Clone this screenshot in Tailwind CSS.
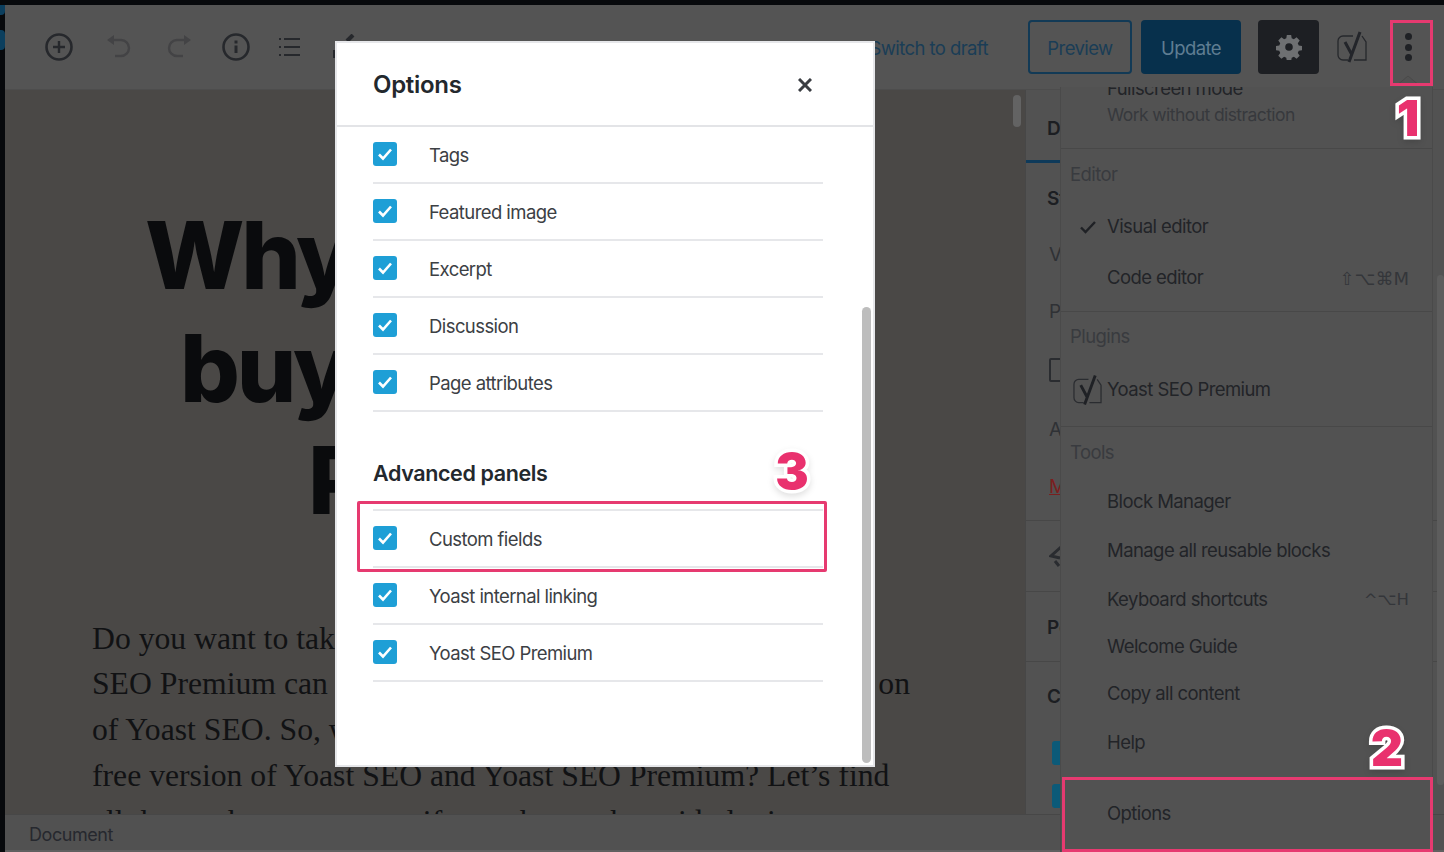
<!DOCTYPE html>
<html lang="en">
<head>
<meta charset="utf-8">
<title>Options</title>
<script src="https://cdn.jsdelivr.net/npm/@tailwindcss/browser@4"></script>
</head>
<body class="bg-[#07090c]">
<div class="relative w-[1444px] h-[852px] overflow-hidden font-['Inter','Liberation_Sans',sans-serif] text-[#24262a]">
  <div class="h-[5px] bg-[#07090c]"></div>
  <div class="flex h-[847px]">
    <div class="w-[5px] flex flex-col bg-[#07090c]">
      <div class="h-[10px] bg-[#0c3f5e] rounded-br-[4px]"></div>
      <div class="h-[15px]"></div>
      <div class="h-[20px] bg-[#0c3f5e] rounded-r-[4px]"></div>
    </div>
    <div class="flex-1 flex flex-col min-w-0">
      <header class="h-[85px] shrink-0 flex items-start bg-[#545454] border-b border-[#4d4d4d] pt-[15px] relative">
        <div class="flex items-center h-[54px] pl-[40px]">
          <svg class="w-[28px] h-[28px]" viewBox="0 0 28 28" fill="none" stroke="#26282c" stroke-width="2.6"><circle cx="14" cy="14" r="12.500"/><path d="M14 8v12M8 14h12" stroke-width="2.4"/></svg>
          <svg class="w-[28px] h-[28px] ml-[32px]" viewBox="0 0 28 28" fill="none" stroke="#434345" stroke-width="2.4"><path d="M9 7h7a8 8 0 0 1 0 16h-6"/><path d="M2 7l7-5v10z" fill="#434345" stroke="none"/></svg>
          <svg class="w-[28px] h-[28px] ml-[32px]" viewBox="0 0 28 28" fill="none" stroke="#434345" stroke-width="2.4"><path d="M19 7h-7a8 8 0 0 0 0 16h6"/><path d="M26 7l-7-5v10z" fill="#434345" stroke="none"/></svg>
          <svg class="w-[28px] h-[28px] ml-[29px]" viewBox="0 0 28 28" fill="none" stroke="#26282c" stroke-width="2.6"><circle cx="14" cy="14" r="12.500"/><path d="M14 12.500v7.500" stroke-width="3"/><path d="M14 7.500v3" stroke-width="3"/></svg>
          <svg class="w-[24px] h-[24px] ml-[28px]" viewBox="0 0 24 24" fill="none" stroke="#26282c" stroke-width="2"><path d="M6 4h16M6 12h16M6 20h16"/><path d="M1 4h2M1 12h2M1 20h2"/></svg>
          <svg class="w-[26px] h-[26px] ml-[31px]" viewBox="0 0 26 26" fill="none" stroke="#26282c" stroke-width="4"><path d="M1 24v-8"/><path d="M14 7l6-6"/></svg>
        </div>
        <div class="flex items-center h-[54px] ml-auto pr-[15px]">
          <span class="pt-[4px] text-[18.500px] tracking-[-0.031em] text-[#1a3d56] mr-[40px]">Switch to draft</span>
          <span class="w-[104px] h-[54px] pt-[4px] flex items-center justify-center border-2 border-[#123a56] rounded-[4px] text-[18.500px] tracking-[-0.031em] text-[#1a3d56]">Preview</span>
          <span class="w-[100px] h-[54px] pt-[4px] ml-[9px] flex items-center justify-center bg-[#07304c] rounded-[4px] text-[18.500px] tracking-[-0.031em] text-[#5f7d92]">Update</span>
          <span class="w-[61px] h-[54px] ml-[17px] flex items-center justify-center bg-[#1d1f23] rounded-[4px]">
            <svg class="w-[26px] h-[26px]" viewBox="0 0 24 24"><path fill="#6e7072" fill-rule="evenodd" d="M10 1h4l.5 3 2 .9 2.500-1.800 2.900 2.900-1.800 2.500.9 2 3 .5v4l-3 .5-.9 2 1.800 2.500-2.900 2.900-2.500-1.800-2 .9-.5 3h-4l-.5-3-2-.9-2.500 1.800-2.900-2.900 1.800-2.500-.9-2-3-.5v-4l3-.5.9-2-1.800-2.500 2.900-2.900 2.500 1.800 2-.9zM12 8.500a3.500 3.500 0 1 0 0 7 3.500 3.500 0 0 0 0-7z"/></svg>
          </span>
          <svg class="w-[30px] h-[32px] ml-[18px]" viewBox="0 0 30 32" fill="none"><path d="M16 5H6a5 5 0 0 0-5 5v14a5 5 0 0 0 5 5h5M25 5l4 6v18H17" stroke="#26282c" stroke-width="1.300"/><path d="M8 11l7 13M23 1L12 31" stroke="#23252a" stroke-width="3"/></svg>
          <div class="w-[42px] ml-[20px] flex flex-col items-center gap-[3.500px]">
            <span class="w-[7px] h-[7px] rounded-full bg-[#1f2125]"></span>
            <span class="w-[7px] h-[7px] rounded-full bg-[#1f2125]"></span>
            <span class="w-[7px] h-[7px] rounded-full bg-[#1f2125]"></span>
          </div>
        </div>
      </header>
      <div class="flex-1 flex min-h-0">
        <main class="w-[1020px] shrink-0 flex bg-[#4a4846] overflow-hidden">
          <div class="w-[1008px] shrink-0 overflow-hidden">
            <h1 class="pt-[109px] font-['Inter',sans-serif] font-extrabold text-[94px] leading-[112.500px] tracking-[-0.035em] text-[#0a0b0d] whitespace-nowrap">
              <div class="pl-[140px]">Why</div>
              <div class="pl-[175px]">buy</div>
              <div class="pl-[303px]">P</div>
            </h1>
            <div class="mt-[79px] pl-[87px] pr-[103px] font-['Liberation_Serif',serif] text-[31.700px] leading-[45.800px] text-[#111214] whitespace-nowrap">
              <p>Do you want to tak</p>
              <p class="flex justify-between"><span>SEO Premium can</span><span>on</span></p>
              <p>of Yoast SEO. So, w</p>
              <p>free version of Yoast SEO and Yoast SEO Premium? Let’s find</p>
              <p>all the work you can save if you choose the paid plugin</p>
            </div>
          </div>
          <div class="pt-[5px]"><div class="w-[8px] h-[32px] rounded-full bg-[#636363]"></div></div>
        </main>
        <aside class="flex-1 bg-[#525252] border-l border-[#474747] overflow-hidden text-[19px] text-[#1c1e22]">
          <div class="h-[73px] pl-[21px] pt-[25px] font-semibold relative">Document<div class="absolute left-0 bottom-0 w-[60px] h-[3px] bg-[#0e3a5a]"></div></div>
          <div class="pl-[21px] h-[358px] border-b border-[#474747] overflow-hidden">
            <div class="h-[62px] pt-[10px] flex items-center font-semibold">Status</div>
            <div class="h-[57px] pt-[4px] flex items-center pl-[2px] text-[#2f3135]">Visibility</div>
            <div class="h-[57px] pt-[4px] flex items-center pl-[2px] text-[#2f3135]">Publish</div>
            <div class="h-[58px] pt-[4px] flex items-center pl-[2px]"><span class="w-[24px] h-[24px] border-2 border-[#2a2c30] rounded-[2px]"></span></div>
            <div class="h-[62px] pt-[4px] flex items-center pl-[2px] text-[#2f3135]">Author</div>
            <div class="h-[56px] flex items-center pl-[2px] text-[#7a1f1f] underline">Move to trash</div>
          </div>
          <div class="h-[71px] pl-[23px] border-b border-[#474747] flex items-center">
            <svg class="w-[14px] h-[24px]" viewBox="0 0 14 24" fill="none" stroke="#2a2c30" stroke-width="3"><path d="M12 3L2 12l9 2M6 17l4 5"/></svg>
          </div>
          <div class="h-[70px] pl-[21px] pt-[4px] border-b border-[#474747] flex items-center font-semibold">Permalink</div>
          <div class="pl-[21px] h-[71px] flex items-center font-semibold">Categories</div>
          <div class="pl-[26px] pt-[8px] flex flex-col gap-[19px]">
            <span class="w-[24px] h-[24px] rounded-[3px] bg-[#0c5a78]"></span>
            <span class="w-[24px] h-[24px] rounded-[3px] bg-[#0c5a78]"></span>
          </div>
        </aside>
      </div>
      <footer class="h-[36px] shrink-0 bg-[#515151] border-t border-[#474747] pl-[24px] pt-[3px] flex items-center text-[18px] tracking-[-0.025em] text-[#26282e]">Document</footer>
      <div class="h-[2px] bg-[#606060] shrink-0"></div>
    </div>
  </div>

  <!-- Right page scrollbar -->
  <div class="absolute left-[1437px] top-[275px] w-[7px] h-[510px] rounded-full bg-[#5d5d5d]"></div>

  <!-- More-menu dropdown -->
  <nav class="absolute left-[1060px] top-[87px] w-[373px] h-[765px] overflow-hidden bg-[#525252] border-x border-[#4a4a4a] text-[18.500px] tracking-[-0.031em] text-[#222428]">
    <div class="-mt-[13px] h-[28px] pl-[46px] pt-[2px] flex items-center">Fullscreen mode</div>
    <div class="h-[26px] pl-[46px] flex items-center text-[17.500px] text-[#37393d]">Work without distraction</div>
    <div class="h-[21px] border-b border-[#484848]"></div>
    <div class="h-[50px] pl-[9px] pt-[2px] flex items-center text-[#393b3f]">Editor</div>
    <div class="h-[54px] pl-[18px] pt-[2px] flex items-center">
      <svg class="w-[18px] h-[18px] mr-[10px]" viewBox="0 0 18 18" fill="none" stroke="#1f2125" stroke-width="2.400"><path d="M2 9.500l4.500 4.500L16 4"/></svg>Visual editor
    </div>
    <div class="h-[48px] pl-[46px] pr-[23px] pt-[2px] flex items-center justify-between">Code editor<span class="text-[18px] tracking-normal text-[#34363a] font-['DejaVu_Sans',sans-serif]">⇧⌥⌘M</span></div>
    <div class="h-[11px] border-b border-[#484848]"></div>
    <div class="h-[48px] pl-[9px] pt-[2px] flex items-center text-[#393b3f]">Plugins</div>
    <div class="h-[58px] pl-[12px] pt-[2px] flex items-center">
      <svg class="w-[29px] h-[32px] mr-[5px]" viewBox="0 0 30 32" fill="none"><path d="M16 5H6a5 5 0 0 0-5 5v14a5 5 0 0 0 5 5h5M25 5l4 6v18H17" stroke="#2a2c30" stroke-width="1.300"/><path d="M8 11l7 13M23 1L12 31" stroke="#1f2125" stroke-width="3"/></svg>Yoast SEO Premium
    </div>
    <div class="h-[9px] border-b border-[#484848]"></div>
    <div class="h-[50px] pl-[9px] pt-[2px] flex items-center text-[#393b3f]">Tools</div>
    <div class="h-[48px] pl-[46px] pt-[2px] flex items-center">Block Manager</div>
    <div class="h-[50px] pl-[46px] pt-[2px] flex items-center">Manage all reusable blocks</div>
    <div class="h-[48px] pl-[46px] pr-[23px] pt-[2px] flex items-center justify-between">Keyboard shortcuts<span class="text-[16.500px] tracking-normal text-[#34363a] font-['DejaVu_Sans',sans-serif]">^⌥H</span></div>
    <div class="h-[46px] pl-[46px] pt-[2px] flex items-center">Welcome Guide</div>
    <div class="h-[48px] pl-[46px] pt-[2px] flex items-center">Copy all content</div>
    <div class="h-[50px] pl-[46px] pt-[2px] flex items-center">Help</div>
    <div class="h-[92px] pl-[46px] pt-[2px] flex items-center">Options</div>
  </nav>
  <svg class="absolute left-[1396px] top-[75px] w-[24px] h-[11px]" viewBox="0 0 24 11" fill="#525252" stroke="#4a4a4a"><path d="M0 11L12 1l12 10"/></svg>

  <!-- Options modal -->
  <section class="absolute left-[335px] top-[41px] w-[540px] h-[726px] overflow-hidden bg-white border-2 border-[#e6e7ea]">
    <div class="h-[84px] pt-[2px] border-b-2 border-[#e3e4e7] pl-[36px] pr-[61px] flex items-center justify-between">
      <h2 class="text-[24px] font-semibold tracking-[-0.012em] text-[#23282d]">Options</h2>
      <svg class="w-[14px] h-[14px]" viewBox="0 0 14 14" fill="none" stroke="#3a3d42" stroke-width="3"><path d="M1 1l12 12M13 1L1 13"/></svg>
    </div>
    <div class="pl-[36px] pr-[50px] text-[18.500px] tracking-[-0.031em] text-[#3c4044]">
      <div class="h-[57px] pt-[2px] flex items-center border-b-2 border-[#e6e7ea]"><span class="w-[24px] h-[24px] mb-[3px] rounded-[3px] bg-[#1e9fd6] flex items-center justify-center mr-[32px]"><svg class="w-[16px] h-[16px]" viewBox="0 0 16 16" fill="none" stroke="#fff" stroke-width="2.600"><path d="M2 8.500l4 4L14 3.500"/></svg></span>Tags</div>
      <div class="h-[57px] pt-[2px] flex items-center border-b-2 border-[#e6e7ea]"><span class="w-[24px] h-[24px] mb-[3px] rounded-[3px] bg-[#1e9fd6] flex items-center justify-center mr-[32px]"><svg class="w-[16px] h-[16px]" viewBox="0 0 16 16" fill="none" stroke="#fff" stroke-width="2.600"><path d="M2 8.500l4 4L14 3.500"/></svg></span>Featured image</div>
      <div class="h-[57px] pt-[2px] flex items-center border-b-2 border-[#e6e7ea]"><span class="w-[24px] h-[24px] mb-[3px] rounded-[3px] bg-[#1e9fd6] flex items-center justify-center mr-[32px]"><svg class="w-[16px] h-[16px]" viewBox="0 0 16 16" fill="none" stroke="#fff" stroke-width="2.600"><path d="M2 8.500l4 4L14 3.500"/></svg></span>Excerpt</div>
      <div class="h-[57px] pt-[2px] flex items-center border-b-2 border-[#e6e7ea]"><span class="w-[24px] h-[24px] mb-[3px] rounded-[3px] bg-[#1e9fd6] flex items-center justify-center mr-[32px]"><svg class="w-[16px] h-[16px]" viewBox="0 0 16 16" fill="none" stroke="#fff" stroke-width="2.600"><path d="M2 8.500l4 4L14 3.500"/></svg></span>Discussion</div>
      <div class="h-[57px] pt-[2px] flex items-center border-b-2 border-[#e6e7ea]"><span class="w-[24px] h-[24px] mb-[3px] rounded-[3px] bg-[#1e9fd6] flex items-center justify-center mr-[32px]"><svg class="w-[16px] h-[16px]" viewBox="0 0 16 16" fill="none" stroke="#fff" stroke-width="2.600"><path d="M2 8.500l4 4L14 3.500"/></svg></span>Page attributes</div>
      <h3 class="pt-[40px] pb-[14px] h-[99px] border-b-2 border-[#e6e7ea] text-[21.500px] leading-[42px] font-semibold tracking-[-0.018em] text-[#23282d]">Advanced panels</h3>
      <div class="h-[57px] pt-[2px] flex items-center border-b-2 border-[#e6e7ea]"><span class="w-[24px] h-[24px] mb-[3px] rounded-[3px] bg-[#1e9fd6] flex items-center justify-center mr-[32px]"><svg class="w-[16px] h-[16px]" viewBox="0 0 16 16" fill="none" stroke="#fff" stroke-width="2.600"><path d="M2 8.500l4 4L14 3.500"/></svg></span>Custom fields</div>
      <div class="h-[57px] pt-[2px] flex items-center border-b-2 border-[#e6e7ea]"><span class="w-[24px] h-[24px] mb-[3px] rounded-[3px] bg-[#1e9fd6] flex items-center justify-center mr-[32px]"><svg class="w-[16px] h-[16px]" viewBox="0 0 16 16" fill="none" stroke="#fff" stroke-width="2.600"><path d="M2 8.500l4 4L14 3.500"/></svg></span>Yoast internal linking</div>
      <div class="h-[57px] pt-[2px] flex items-center border-b-2 border-[#e6e7ea]"><span class="w-[24px] h-[24px] mb-[3px] rounded-[3px] bg-[#1e9fd6] flex items-center justify-center mr-[32px]"><svg class="w-[16px] h-[16px]" viewBox="0 0 16 16" fill="none" stroke="#fff" stroke-width="2.600"><path d="M2 8.500l4 4L14 3.500"/></svg></span>Yoast SEO Premium</div>
    </div>
    <div class="absolute left-[525px] top-[264px] w-[9px] h-[456px] rounded-full bg-[#bdbdbd]"></div>
  </section>

  <!-- Annotations -->
  <div class="absolute left-[1390px] top-[20px] w-[43px] h-[66px] border-[3px] border-[#e63a70]"></div>
  <div class="absolute left-[1062px] top-[777px] w-[371px] h-[75px] border-[3px] border-[#e63a70]"></div>
  <div class="absolute left-[357px] top-[501px] w-[470px] h-[71px] border-[3px] border-[#e63a70] rounded-[2px]"></div>
  <span class="absolute left-[1391px] top-[88px] w-[34px] text-center text-[50px] leading-[60px] font-black text-[#e9316e] [-webkit-text-stroke:7px_white] [paint-order:stroke_fill] drop-shadow-md">1</span>
  <span class="absolute left-[1368px] top-[718px] w-[38px] text-center text-[50px] leading-[60px] font-black text-[#e9316e] [-webkit-text-stroke:7px_white] [paint-order:stroke_fill] drop-shadow-md">2</span>
  <span class="absolute left-[773px] top-[441px] w-[38px] text-center text-[50px] leading-[60px] font-black text-[#e9316e] [-webkit-text-stroke:7px_white] [paint-order:stroke_fill] drop-shadow-md">3</span>
</div>
</body>
</html>
